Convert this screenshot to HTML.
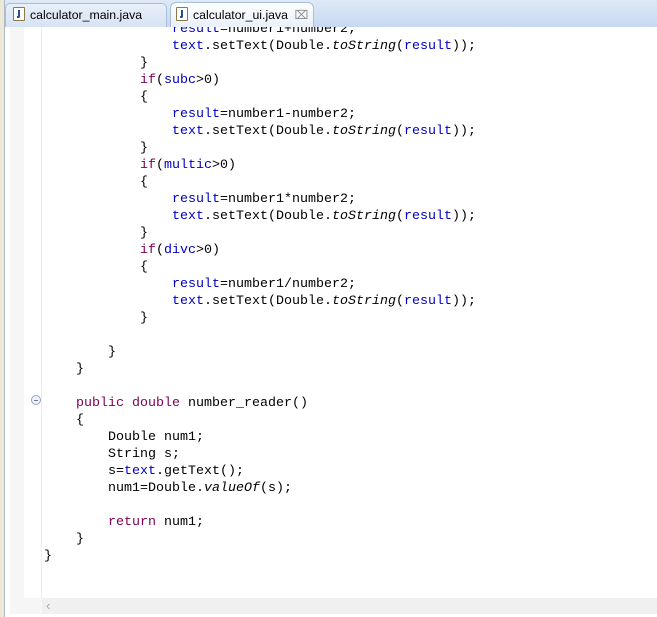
<!DOCTYPE html>
<html><head><style>
body{margin:0;width:657px;height:617px;overflow:hidden;background:#fff;position:relative;font-family:"Liberation Sans",sans-serif}
.abs{position:absolute}
pre{margin:0;font-family:"Liberation Mono",monospace;font-size:13.33px;line-height:17px;color:#000}
.k{color:#7f0055}
.f{color:#0000c0}
.i{font-style:italic}
.tab{position:absolute;top:3px;height:24px;font-size:12.3px;line-height:24px;color:#000}
.ic{display:inline-block;width:10px;height:12px;border:1px solid #8a7a4a;background:#fff;vertical-align:-2px;margin-right:5px;position:relative;border-radius:1px}
.ic:after{content:"";position:absolute;left:3px;top:2px;border-right:2px solid #2b4f8a;border-bottom:2px solid #2b4f8a;width:1px;height:6px;border-radius:0 0 2px 0}
</style></head><body>
<div class="abs" style="left:0;top:0;width:657px;height:27px;background:linear-gradient(#dfe9f7,#c6d9f1)"></div>
<div class="abs" style="left:0;top:0;width:4px;height:617px;background:#ece9d8"></div>
<div class="abs" style="left:4px;top:0;width:1px;height:617px;background:#b0b8c4"></div>
<div class="abs" style="left:5px;top:3px;width:160px;height:24px;background:linear-gradient(#e8eff9,#d6e3f4);border:1px solid #a9bfd9;border-bottom:none;border-radius:5px 5px 0 0"></div>
<div class="abs" style="left:170px;top:2px;width:142px;height:25px;background:linear-gradient(#fdfeff,#e9f0fa);border:1px solid #a9bfd9;border-bottom:none;border-radius:6px 6px 0 0"></div>
<div class="tab" style="left:13px"><span class="ic"></span>calculator_main.java</div>
<div class="tab" style="left:176px"><span class="ic"></span>calculator_ui.java <span style="color:#888;font-size:12px;margin-left:3px">&#x2327;</span></div>
<div class="abs" style="left:5px;top:27px;width:652px;height:590px;background:#fff"></div>
<div class="abs" style="left:10px;top:27px;width:14px;height:571px;background:#f6f6f6"></div>
<div class="abs" style="left:41px;top:27px;width:1px;height:571px;background:#ececec"></div>
<div class="abs" style="left:10px;top:598px;width:32px;height:16px;background:#f6f6f6"></div>
<div class="abs" style="left:42px;top:598px;width:615px;height:16px;background:#f0f0f0"></div>
<div class="abs" style="left:46px;top:598px;font-size:13px;line-height:16px;color:#aaa">&#x2039;</div>
<div class="abs" style="left:31px;top:395px;width:8px;height:8px;border:1px solid #9aa6b6;border-radius:50%;background:#eef2f8"></div>
<div class="abs" style="left:34px;top:400px;width:4px;height:1px;background:#6a7a92"></div>
<div class="abs" style="left:0;top:27px;width:657px;height:571px;overflow:hidden">
<pre class="abs" style="left:44px;top:-6px">                <span class="f">result</span>=number1+number2;
                <span class="f">text</span>.setText(Double.<span class="i">toString</span>(<span class="f">result</span>));
            }
            <span class="k">if</span>(<span class="f">subc</span>&gt;0)
            {
                <span class="f">result</span>=number1-number2;
                <span class="f">text</span>.setText(Double.<span class="i">toString</span>(<span class="f">result</span>));
            }
            <span class="k">if</span>(<span class="f">multic</span>&gt;0)
            {
                <span class="f">result</span>=number1*number2;
                <span class="f">text</span>.setText(Double.<span class="i">toString</span>(<span class="f">result</span>));
            }
            <span class="k">if</span>(<span class="f">divc</span>&gt;0)
            {
                <span class="f">result</span>=number1/number2;
                <span class="f">text</span>.setText(Double.<span class="i">toString</span>(<span class="f">result</span>));
            }

        }
    }

    <span class="k">public</span> <span class="k">double</span> number_reader()
    {
        Double num1;
        String s;
        s=<span class="f">text</span>.getText();
        num1=Double.<span class="i">valueOf</span>(s);

        <span class="k">return</span> num1;
    }
}</pre>
</div>
</body></html>
